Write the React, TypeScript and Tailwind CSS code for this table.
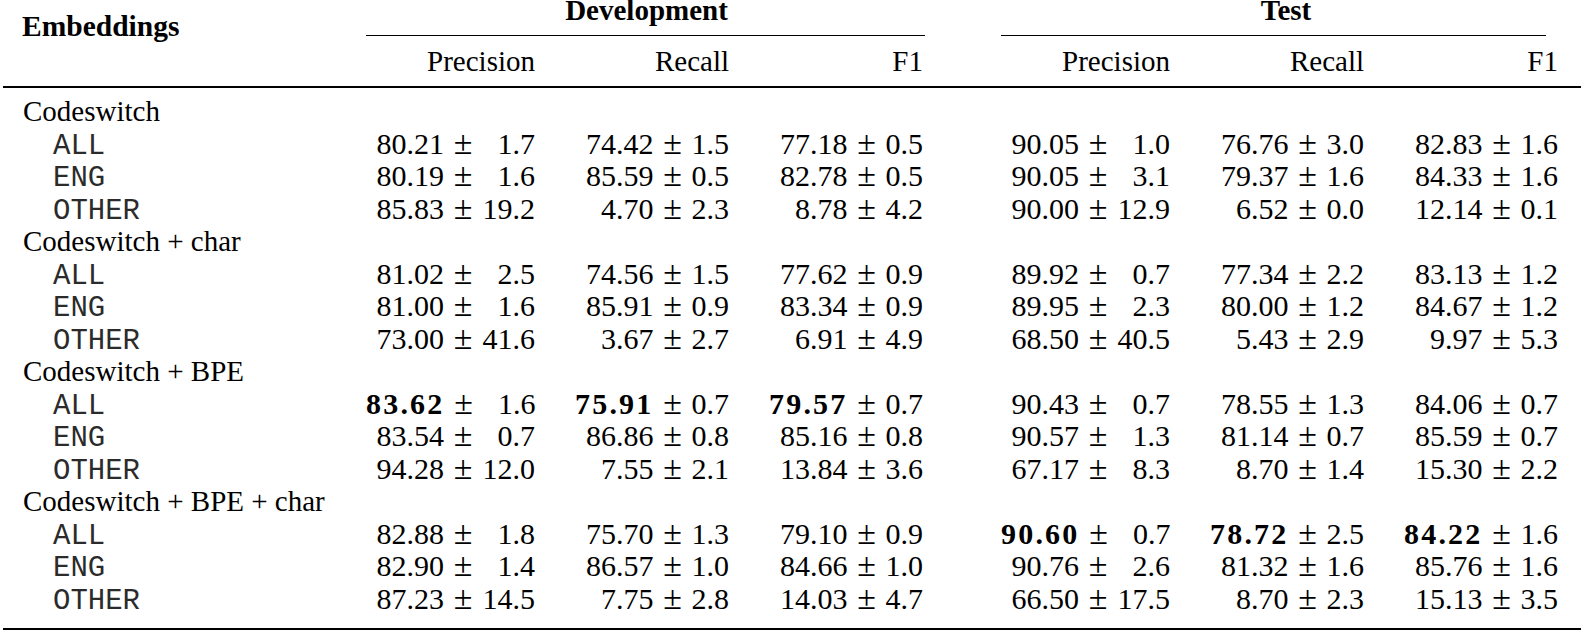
type Cell = [string, string, boolean?];

type Row = { label: string; cells: Cell[] };

type Group = { name: string; rows: Row[] };

const groups: Group[] = [
  {
    name: "Codeswitch",
    rows: [
      { label: "ALL", cells: [["80.21", "1.7"], ["74.42", "1.5"], ["77.18", "0.5"], ["90.05", "1.0"], ["76.76", "3.0"], ["82.83", "1.6"]] },
      { label: "ENG", cells: [["80.19", "1.6"], ["85.59", "0.5"], ["82.78", "0.5"], ["90.05", "3.1"], ["79.37", "1.6"], ["84.33", "1.6"]] },
      { label: "OTHER", cells: [["85.83", "19.2"], ["4.70", "2.3"], ["8.78", "4.2"], ["90.00", "12.9"], ["6.52", "0.0"], ["12.14", "0.1"]] },
    ],
  },
  {
    name: "Codeswitch + char",
    rows: [
      { label: "ALL", cells: [["81.02", "2.5"], ["74.56", "1.5"], ["77.62", "0.9"], ["89.92", "0.7"], ["77.34", "2.2"], ["83.13", "1.2"]] },
      { label: "ENG", cells: [["81.00", "1.6"], ["85.91", "0.9"], ["83.34", "0.9"], ["89.95", "2.3"], ["80.00", "1.2"], ["84.67", "1.2"]] },
      { label: "OTHER", cells: [["73.00", "41.6"], ["3.67", "2.7"], ["6.91", "4.9"], ["68.50", "40.5"], ["5.43", "2.9"], ["9.97", "5.3"]] },
    ],
  },
  {
    name: "Codeswitch + BPE",
    rows: [
      { label: "ALL", cells: [["83.62", "1.6", true], ["75.91", "0.7", true], ["79.57", "0.7", true], ["90.43", "0.7"], ["78.55", "1.3"], ["84.06", "0.7"]] },
      { label: "ENG", cells: [["83.54", "0.7"], ["86.86", "0.8"], ["85.16", "0.8"], ["90.57", "1.3"], ["81.14", "0.7"], ["85.59", "0.7"]] },
      { label: "OTHER", cells: [["94.28", "12.0"], ["7.55", "2.1"], ["13.84", "3.6"], ["67.17", "8.3"], ["8.70", "1.4"], ["15.30", "2.2"]] },
    ],
  },
  {
    name: "Codeswitch + BPE + char",
    rows: [
      { label: "ALL", cells: [["82.88", "1.8"], ["75.70", "1.3"], ["79.10", "0.9"], ["90.60", "0.7", true], ["78.72", "2.5", true], ["84.22", "1.6", true]] },
      { label: "ENG", cells: [["82.90", "1.4"], ["86.57", "1.0"], ["84.66", "1.0"], ["90.76", "2.6"], ["81.32", "1.6"], ["85.76", "1.6"]] },
      { label: "OTHER", cells: [["87.23", "14.5"], ["7.75", "2.8"], ["14.03", "4.7"], ["66.50", "17.5"], ["8.70", "2.3"], ["15.13", "3.5"]] },
    ],
  },
];

// precision columns keep the ± aligned (two-digit std values)
const padded = [true, false, false, true, false, false];

const grid = "grid grid-cols-[366px_173px_194px_194px_74px_173px_194px_194px]";

function Num({ cell, pad }: { cell: Cell; pad: boolean }) {
  const [mean, std, bold] = cell;
  return (
    <div className="pr-[4px] text-right whitespace-nowrap text-[30px]">
      <span className={bold ? "font-bold tracking-[2.2px]" : ""}>{mean}</span>
      <span className="inline-block w-[38px] text-center text-[34px] leading-[20px]">±</span>
      <span className={pad ? "inline-block w-[53px] text-right" : ""}>{std}</span>
    </div>
  );
}

export default function App() {
  return (
    <div className="min-h-screen bg-white text-black font-['Liberation_Serif','Times_New_Roman',serif] text-[29px] overflow-hidden">
      {/* header */}
      <div className="flex h-[86px]">
        <div className="w-[366px] pl-[22px] pt-[10px] leading-[32.5px] font-bold text-[29.5px]">Embeddings</div>
        <div className="flex flex-col">
          <div className="grid grid-cols-[561px_74px_561px] h-[20px] leading-[20px] font-bold">
            <div className="text-center">Development</div>
            <div />
            <div className="text-center pl-[9px]">Test</div>
          </div>
          <div className="grid grid-cols-[561px_74px_561px] mt-[14.5px]">
            <div className="w-[559px] h-[1px] bg-black" />
            <div />
            <div className="w-[545px] h-[1px] bg-black" />
          </div>
          <div className="grid grid-cols-[173px_194px_194px_74px_173px_194px_194px] mt-[9.5px] h-[32.5px] leading-[32.5px]">
            <div className="pr-[4px] text-right">Precision</div>
            <div className="pr-[4px] text-right">Recall</div>
            <div className="pr-[4px] text-right">F1</div>
            <div />
            <div className="pr-[4px] text-right">Precision</div>
            <div className="pr-[4px] text-right">Recall</div>
            <div className="pr-[4px] text-right">F1</div>
          </div>
        </div>
      </div>
      <div className="ml-[3px] h-[1.5px] bg-black" />

      {/* body */}
      <div className="pt-[7.5px] leading-[32.5px]">
        {groups.map((g) => (
          <div key={g.name}>
            <div className="h-[32.5px] pl-[23px]">{g.name}</div>
            {g.rows.map((r) => (
              <div key={r.label} className={`${grid} h-[32.5px]`}>
                <div className="pl-[53px]">
                  <span className="font-['Courier_New','Nimbus_Mono_PS','FreeMono','Liberation_Mono',monospace] text-[29px] leading-[20px] text-[#2b2b2b]">{r.label}</span>
                </div>
                {r.cells.slice(0, 3).map((c, i) => (
                  <Num key={i} cell={c} pad={padded[i]} />
                ))}
                <div />
                {r.cells.slice(3).map((c, i) => (
                  <Num key={i + 3} cell={c} pad={padded[i + 3]} />
                ))}
              </div>
            ))}
          </div>
        ))}
      </div>
      <div className="ml-[3px] mt-[12.5px] h-[2.5px] bg-black" />
    </div>
  );
}
